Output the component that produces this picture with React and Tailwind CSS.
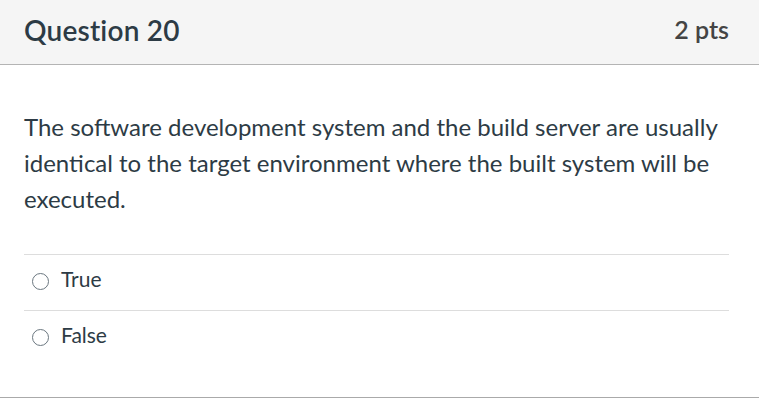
import React from "react";

const options = ["True", "False"];

const App = () => {
  return (
    <div className="w-[759px] h-[400px] bg-white text-[#2d3b45]" style={{ fontFamily: "Lato, 'Noto Sans', sans-serif" }}>
      <div className="border-b border-[#aaaaaa]">
        {/* header */}
        <div className="flex items-center justify-between h-[65px] bg-[#f5f5f5] pl-6 pr-[30px] border-b border-[#b4b4b4]">
          <h2 className="text-[28px] font-semibold tracking-[0.2px] leading-none -mt-[5px]">Question 20</h2>
          <span className="text-[25px] font-semibold text-[#444] leading-none -mt-[5px]">2 pts</span>
        </div>

        {/* body */}
        <div className="pl-6 pr-[30px] pt-[44px] pb-[37px]">
          <p className="text-[24px] leading-[36px]">
            The software development system and the build server are usually identical to the target environment where the built system will be executed.
          </p>
        </div>

        <div className="pl-6 pr-[30px] pb-[31px]">
          {options.map((opt) => (
            <div key={opt} className="flex items-center gap-[12px] h-[56px] border-t border-[#dddddd] pl-[8px] pb-[3px]">
              <span className="w-[17px] h-[17px] rounded-full border-[1.5px] border-[#6b7780] bg-white" />
              <span className="text-[21px] -mt-[4px]">{opt}</span>
            </div>
          ))}
        </div>
      </div>
    </div>
  );
};

export default App;
